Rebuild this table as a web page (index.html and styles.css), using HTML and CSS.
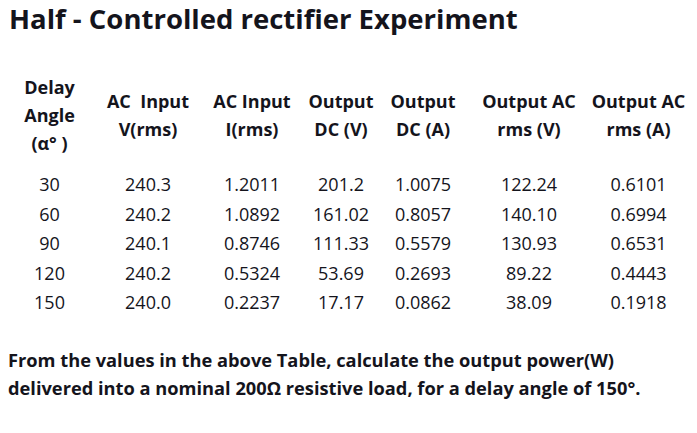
FILE: index.html
```html
<!DOCTYPE html>
<html lang="en">
<head>
<meta charset="utf-8">
<title>Half - Controlled rectifier Experiment</title>
<link rel="stylesheet" href="styles.css">
</head>
<body>
<h1 class="title">Half - Controlled rectifier Experiment</h1>
<table class="data">
  <colgroup>
    <col class="c1"><col class="c2"><col class="c3"><col class="c4"><col class="c5"><col class="c6"><col class="c7">
  </colgroup>
  <thead>
    <tr>
      <th class="first">Delay<br>Angle<br>(α° )</th>
      <th>AC&nbsp; Input<br>V(rms)</th>
      <th>AC Input<br>I(rms)</th>
      <th>Output<br>DC (V)</th>
      <th>Output<br>DC (A)</th>
      <th>Output AC<br>rms (V)</th>
      <th>Output AC<br>rms (A)</th>
    </tr>
  </thead>
  <tbody>
    <tr><td class="first">30</td><td>240.3</td><td>1.2011</td><td>201.2</td><td>1.0075</td><td>122.24</td><td>0.6101</td></tr>
    <tr><td class="first">60</td><td>240.2</td><td>1.0892</td><td>161.02</td><td>0.8057</td><td>140.10</td><td>0.6994</td></tr>
    <tr><td class="first">90</td><td>240.1</td><td>0.8746</td><td>111.33</td><td>0.5579</td><td>130.93</td><td>0.6531</td></tr>
    <tr><td class="first">120</td><td>240.2</td><td>0.5324</td><td>53.69</td><td>0.2693</td><td>89.22</td><td>0.4443</td></tr>
    <tr><td class="first">150</td><td>240.0</td><td>0.2237</td><td>17.17</td><td>0.0862</td><td>38.09</td><td>0.1918</td></tr>
  </tbody>
</table>
<p class="question">From the values in the above Table, calculate the output power(W)<br>delivered into a nominal 200Ω resistive load, for a delay angle of 150°.</p>
</body>
</html>
```
FILE: styles.css
```css
html, body {
  margin: 0;
  padding: 0;
  background: #ffffff;
}

body {
  font-family: "Open Sans", "Noto Sans", sans-serif;
  color: #14141c;
  padding-left: 8px;
}

.title {
  margin: 0;
  font-size: 27.5px;
  font-weight: 700;
  line-height: 38px;
  padding-left: 1px;
}

.data {
  border-collapse: collapse;
  table-layout: fixed;
  width: 682px;
  margin-top: 35px;
}

.c1 { width: 91px; }
.c2 { width: 98px; }
.c3 { width: 110px; }
.c4 { width: 68px; }
.c5 { width: 96px; }
.c6 { width: 116px; }
.c7 { width: 103px; }

.data th,
.data td {
  padding: 0;
  text-align: center;
  white-space: nowrap;
  font-size: 18px;
}

.data th {
  font-weight: 700;
  line-height: 28px;
  vertical-align: middle;
  padding-bottom: 13px;
}

.data td {
  font-weight: 400;
  line-height: 29.5px;
  height: 29.5px;
}

.data .first {
  padding-right: 8px;
}

.question {
  margin: 28px 0 0 0;
  font-size: 18.25px;
  font-weight: 700;
  line-height: 28px;
}
```
